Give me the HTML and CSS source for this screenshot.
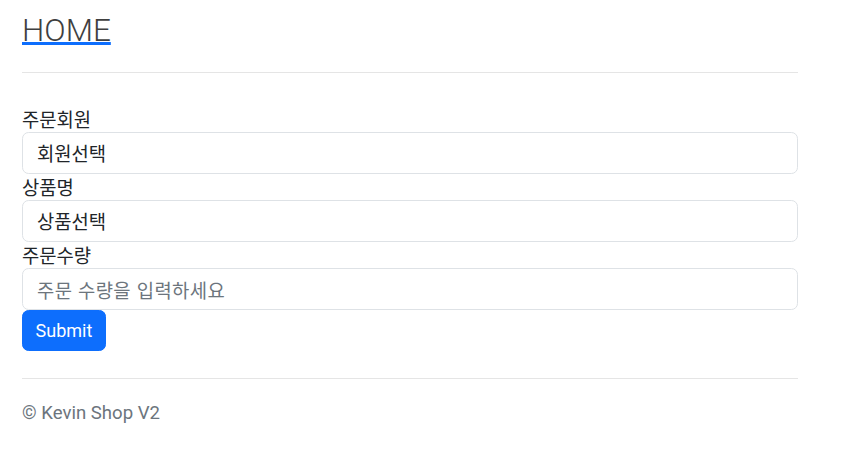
FILE: index.html
```html
<!DOCTYPE html>
<html lang="ko">
<head>
<meta charset="utf-8">
<title>Kevin Shop</title>
<link rel="stylesheet" href="styles.css">
</head>
<body>
<div class="page">
  <div class="header">
    <a class="home-link" href="/"><h3 class="home-title">HOME</h3></a>
  </div>
  <form class="order-form">
    <div class="field">
      <label class="field-label" for="member">주문회원</label>
      <select id="member" class="control">
        <option>회원선택</option>
      </select>
    </div>
    <div class="field">
      <label class="field-label" for="item">상품명</label>
      <select id="item" class="control">
        <option>상품선택</option>
      </select>
    </div>
    <div class="field">
      <label class="field-label" for="count">주문수량</label>
      <input id="count" class="control" type="number" placeholder="주문 수량을 입력하세요">
    </div>
    <button type="submit" class="btn-primary">Submit</button>
  </form>
  <div class="footer">
    <p class="footer-text">© Kevin Shop V2</p>
  </div>
</div>
</body>
</html>
```
FILE: styles.css
```css
html, body {
  margin: 0;
  padding: 0;
  background: #fff;
}
body {
  font-family: Roboto, "Noto Sans CJK KR", sans-serif;
  font-size: 17.6px;
  line-height: 1.5;
  color: #212529;
}
.page {
  width: 776px;
  margin-left: 22px;
}
.header {
  padding-top: 11px;
  padding-bottom: 21px;
  border-bottom: 1px solid #e5e5e5;
}
.home-link {
  color: #0d6efd;
  text-decoration: underline;
  text-decoration-color: #0d6efd;
  text-decoration-thickness: 3px;
  text-underline-offset: 1px;
}
.home-title {
  margin: 0;
  font-size: 31.5px;
  font-weight: 300;
  line-height: 40px;
  color: #3f3f3f;
}
.order-form {
  padding-top: 33px;
  padding-bottom: 27px;
  border-bottom: 1px solid #e5e5e5;
}
.field {
  display: flex;
  flex-direction: column;
}
.field-label {
  display: block;
  height: 26px;
  line-height: 26px;
  font-family: "Noto Sans CJK KR", sans-serif;
  font-size: 18.8px;
}
.control {
  display: block;
  box-sizing: border-box;
  width: 100%;
  height: 42px;
  margin: 0;
  padding: 6px 14px;
  font-family: "Noto Sans CJK KR", sans-serif;
  font-size: 18.8px;
  line-height: 28px;
  color: #212529;
  background: #fff;
  border: 1px solid #dee2e6;
  border-radius: 6.6px;
  -webkit-appearance: none;
  appearance: none;
  outline: none;
}
.control::placeholder {
  color: #6c757d;
  letter-spacing: 0.4px;
  opacity: 1;
}
.btn-primary {
  display: block;
  box-sizing: border-box;
  width: 84px;
  height: 41px;
  margin: 0;
  padding: 0;
  font-family: Roboto, sans-serif;
  font-size: 18px;
  line-height: 39px;
  text-align: center;
  color: #fff;
  background: #0d6efd;
  border: 1px solid #0d6efd;
  border-radius: 6.6px;
}
.footer {
  padding-top: 21px;
}
.footer-text {
  margin: 0;
  color: #6c757d;
  font-size: 18.6px;
  line-height: 26px;
}
```
